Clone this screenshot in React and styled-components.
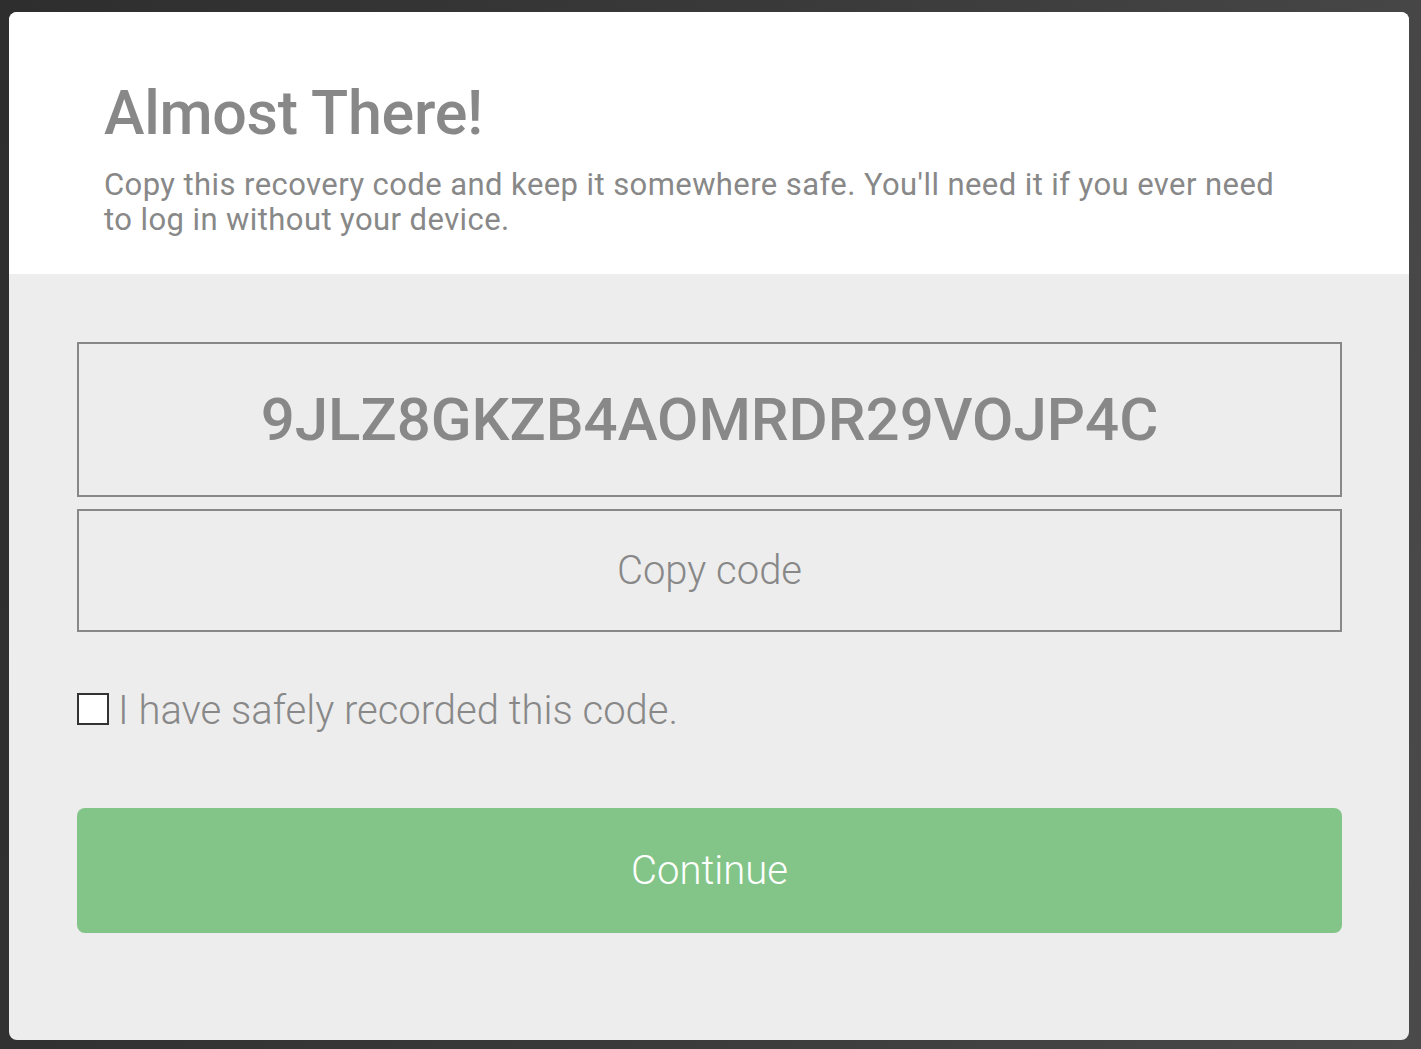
import React, { useState } from "react";
import styled, { createGlobalStyle } from "styled-components";

const GlobalStyle = createGlobalStyle`
  html, body {
    margin: 0;
    padding: 0;
    height: 100%;
  }
  body {
    font-family: Roboto, "Liberation Sans", Arial, sans-serif;
    background: linear-gradient(100deg, #2e2e2e 0%, #3a3a3a 50%, #4a4a4a 100%);
  }
  * {
    box-sizing: border-box;
  }
`;

const Page = styled.div`
  width: 1421px;
  height: 1049px;
  padding: 12px 12px 9px 9px;
`;

const Modal = styled.div`
  width: 1400px;
  height: 1028px;
  border-radius: 8px;
  overflow: hidden;
  display: flex;
  flex-direction: column;
  background: #ededed;
`;

const Header = styled.div`
  background: #fff;
  height: 262px;
  padding: 66px 96px 0 95px;
`;

const Title = styled.h1`
  margin: 0;
  font-size: 61px;
  font-weight: 500;
  line-height: 70px;
  color: #888;
  letter-spacing: -0.3px;
`;

const Subtitle = styled.p`
  margin: 19px 0 0;
  font-size: 31px;
  line-height: 35px;
  font-weight: 400;
  color: #888;
  letter-spacing: 0.42px;
  max-width: 1190px;
`;

const Body = styled.div`
  flex: 1;
  padding: 68px 67px 0 68px;
  display: flex;
  flex-direction: column;
`;

const CodeBox = styled.div`
  height: 155px;
  border: 2px solid #888;
  display: flex;
  align-items: center;
  justify-content: center;
  font-size: 60px;
  font-weight: 500;
  color: #888;
`;

const CopyButton = styled.button`
  margin-top: 12px;
  height: 123px;
  border: 2px solid #888;
  background: transparent;
  font-family: inherit;
  font-size: 40px;
  font-weight: 300;
  color: #888;
  cursor: pointer;
`;

const CheckRow = styled.label`
  margin-top: 55px;
  display: flex;
  align-items: center;
  gap: 9px;
  font-size: 40px;
  font-weight: 300;
  color: #888;
  cursor: pointer;
`;

const Box = styled.span`
  width: 32px;
  height: 32px;
  margin-top: -4px;
  border: 2px solid #333;
  background: #fff;
  flex: none;
  display: flex;
  align-items: center;
  justify-content: center;
  color: #333;
  font-size: 24px;
  line-height: 1;
`;

const ContinueButton = styled.button`
  margin-top: 74px;
  height: 125px;
  border: none;
  border-radius: 8px;
  background: #83c589;
  color: #fff;
  font-family: inherit;
  font-size: 40px;
  font-weight: 300;
  cursor: pointer;
`;

export default function App() {
  const [checked, setChecked] = useState(false);
  return (
    <>
      <GlobalStyle />
      <Page>
        <Modal>
          <Header>
            <Title>Almost There!</Title>
            <Subtitle>
              Copy this recovery code and keep it somewhere safe. You'll need it
              if you ever need to log in without your device.
            </Subtitle>
          </Header>
          <Body>
            <CodeBox>9JLZ8GKZB4AOMRDR29VOJP4C</CodeBox>
            <CopyButton>Copy code</CopyButton>
            <CheckRow onClick={() => setChecked(!checked)}>
              <Box>{checked ? "✓" : ""}</Box>
              I have safely recorded this code.
            </CheckRow>
            <ContinueButton>Continue</ContinueButton>
          </Body>
        </Modal>
      </Page>
    </>
  );
}
